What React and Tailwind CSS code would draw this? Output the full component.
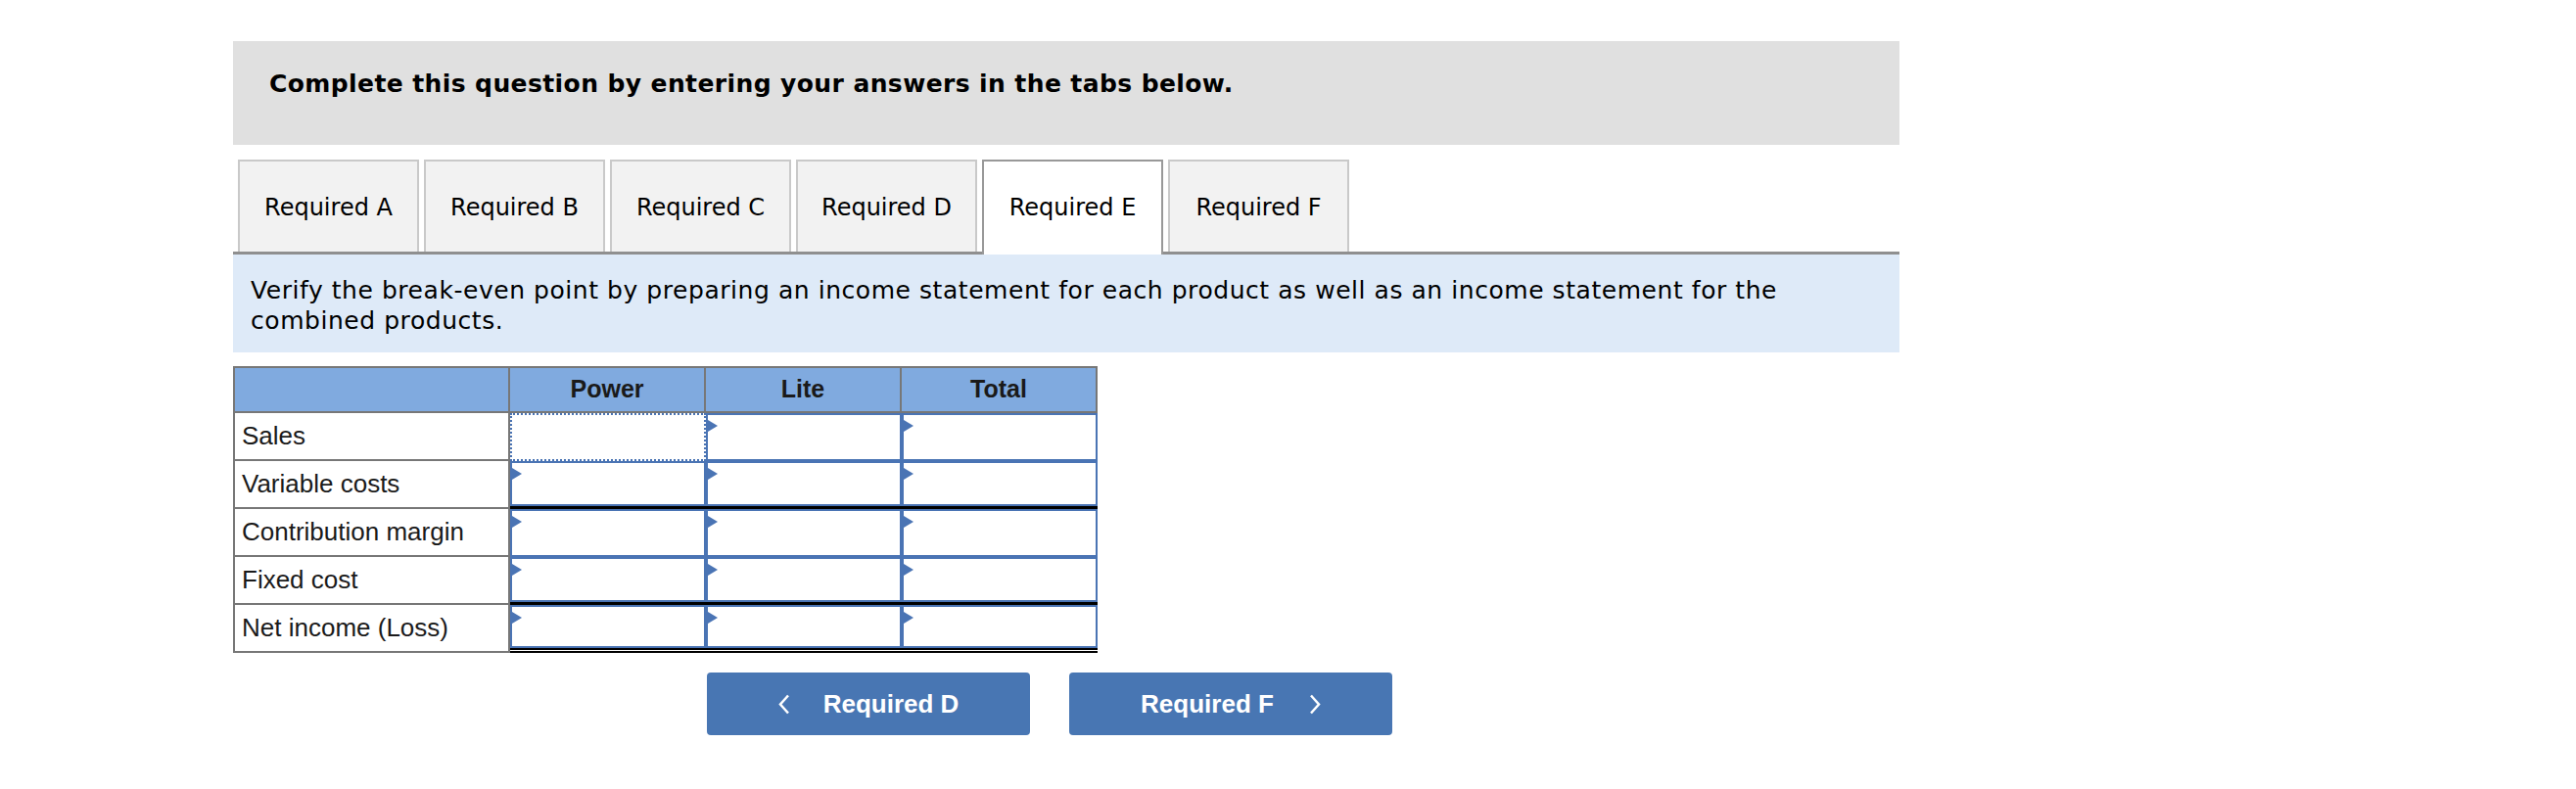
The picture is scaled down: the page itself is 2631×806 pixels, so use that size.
import { useState } from 'react'

const tabs = ['Required A', 'Required B', 'Required C', 'Required D', 'Required E', 'Required F']

const rows = [
  { label: 'Sales', rule: 'none' },
  { label: 'Variable costs', rule: 'single' },
  { label: 'Contribution margin', rule: 'none' },
  { label: 'Fixed cost', rule: 'single' },
  { label: 'Net income (Loss)', rule: 'double' },
]

const cols = ['Power', 'Lite', 'Total']

function Cell({ focused, rule }) {
  const ruleClass =
    rule === 'single'
      ? 'border-b-[3px] border-black'
      : rule === 'double'
      ? 'border-b-[5px] border-double border-black'
      : ''
  return (
    <div className={`relative w-[200px] h-full flex flex-col ${ruleClass}`}>
      {focused ? (
        <div className="flex-1 border-2 border-dotted border-[#4a74b4] bg-white"></div>
      ) : (
        <>
          <input
            type="text"
            className="flex-1 w-full min-h-0 border-2 border-[#4a74b4] bg-white outline-none"
          />
          <span className="absolute left-[2px] top-[7px] w-0 h-0 border-y-[6px] border-y-transparent border-l-[10px] border-l-[#4a74b4]"></span>
        </>
      )}
    </div>
  )
}

export default function App() {
  const [active, setActive] = useState(4)

  return (
    <div className="w-[2631px] h-[806px] bg-white pl-[238px] pt-[42px] font-['DejaVu_Sans',Verdana,sans-serif] text-black">
      <div className="w-[1702px]">
        {/* Header */}
        <div className="h-[106px] bg-[#e0e0e0] pl-[37px] pt-[28px]">
          <h1 className="text-[25px] leading-[32px] font-bold tracking-[0.4px]">
            Complete this question by entering your answers in the tabs below.
          </h1>
        </div>

        {/* Tabs */}
        <div className="mt-[15px] h-[97px] flex items-start gap-[5px] pl-[5px] border-b-[3px] border-[#8f8f8f]">
          {tabs.map((t, i) => (
            <button
              key={t}
              onClick={() => setActive(i)}
              className={`w-[185px] flex items-center justify-center text-[24px] border-2 border-b-0 ${
                i === active
                  ? 'h-[97px] pb-[2px] bg-white border-[#999999] relative z-10'
                  : 'h-[94px] pt-[2px] bg-[#f2f2f2] border-[#c9c9c9]'
              }`}
            >
              {t}
            </button>
          ))}
        </div>

        {/* Instructions */}
        <div className="bg-[#deeaf8] pl-[18px] pr-[18px] pt-[21px] pb-[17px] text-[25px] leading-[31px] tracking-[0.55px]">
          Verify the break-even point by preparing an income statement for each product as well as an income statement for the combined products.
        </div>

        {/* Table */}
        <div className="mt-[14px] w-[883px] font-['Liberation_Sans',Arial,sans-serif]">
          <div className="flex h-[48px] bg-[#80aadf] border-2 border-[#777777]">
            <div className="w-[281px] border-r-2 border-[#777777]"></div>
            {cols.map((c, i) => (
              <div
                key={c}
                className={`flex items-center justify-center text-[25px] font-bold text-[#1a1a1a] ${
                  i < 2 ? 'w-[200px] border-r-2 border-[#777777]' : 'flex-1'
                }`}
              >
                {c}
              </div>
            ))}
          </div>
          {rows.map((r, ri) => (
            <div key={r.label} className="flex h-[49px]">
              <div className="w-[283px] flex items-center pl-[7px] border-l-2 border-r-2 border-b-2 border-[#777777] text-[26px] text-[#1a1a1a]">
                {r.label}
              </div>
              {cols.map((c, ci) => (
                <Cell key={c} focused={ri === 0 && ci === 0} rule={r.rule} />
              ))}
            </div>
          ))}
        </div>

        {/* Navigation */}
        <div className="mt-[20px] ml-[484px] flex gap-[40px] font-['Liberation_Sans',Arial,sans-serif]">
          <button className="w-[330px] h-[64px] rounded-[4px] bg-[#4876b3] text-white flex items-center justify-center gap-[34px] text-[26px] font-bold">
            <svg width="12" height="21" viewBox="0 0 12 21" fill="none">
              <polyline points="10,1.5 2,10.5 10,19.5" stroke="white" strokeWidth="2.5" />
            </svg>
            <span>Required D</span>
          </button>
          <button className="w-[330px] h-[64px] rounded-[4px] bg-[#4876b3] text-white flex items-center justify-center gap-[36px] text-[26px] font-bold">
            <span>Required F</span>
            <svg width="12" height="21" viewBox="0 0 12 21" fill="none">
              <polyline points="2,1.5 10,10.5 2,19.5" stroke="white" strokeWidth="2.5" />
            </svg>
          </button>
        </div>
      </div>
    </div>
  )
}
